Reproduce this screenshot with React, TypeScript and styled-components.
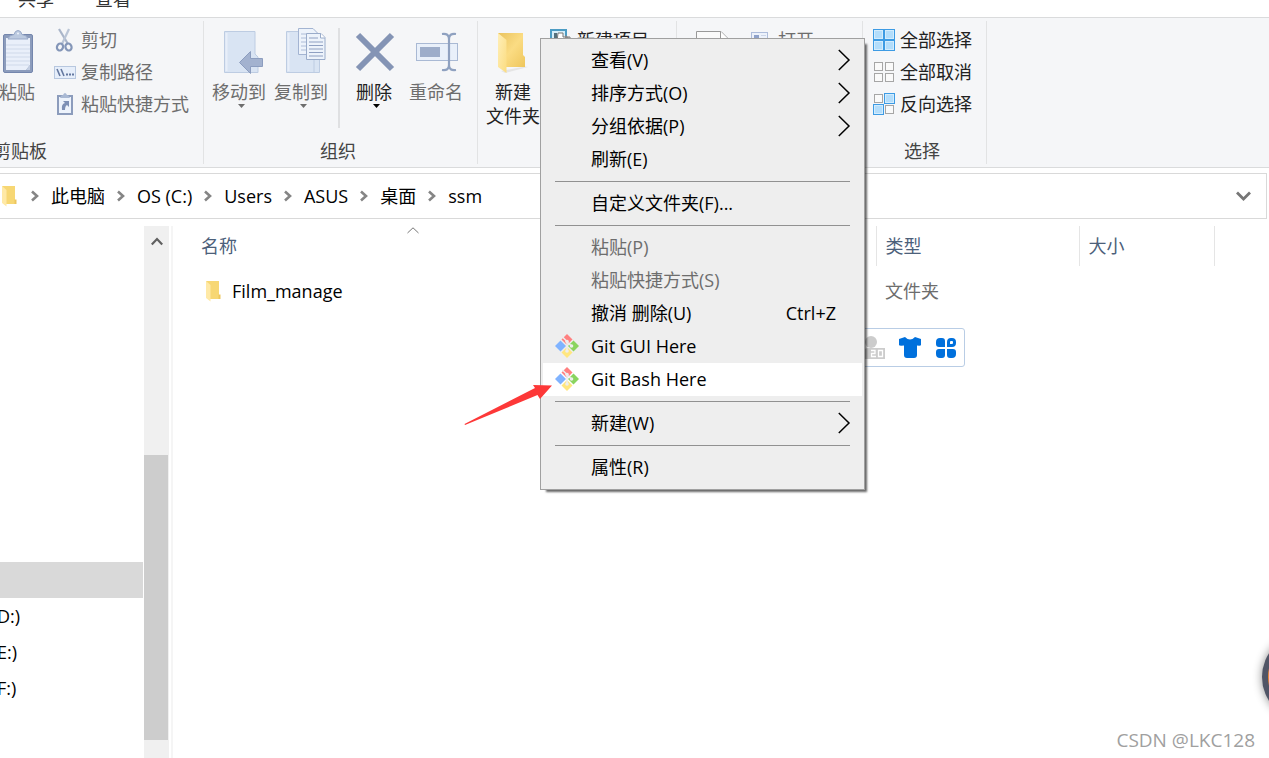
import React from "react";
import styled, { createGlobalStyle } from "styled-components";

const Global = createGlobalStyle`
  *, *::before, *::after { box-sizing: border-box; }
  body { margin: 0; background: #fff; overflow: hidden; }
  body, button, input {
    font-family: "Open Sans", "Noto Sans CJK SC", sans-serif;
    font-size: 18px;
    line-height: 24px;
    color: #000;
  }
  button { border: 0; padding: 0; margin: 0; background: none; text-align: inherit; }
  svg { display: block; flex: none; overflow: visible; }
`;

const Window = styled.div`
  position: relative;
  display: flex;
  flex-direction: column;
  min-height: 100vh;
  overflow: hidden;
`;

/* ---------- ribbon ---------- */

const Tabs = styled.nav`
  display: flex;
  align-items: flex-end;
  gap: 41px;
  height: 17px;
  padding: 0 18px 6px;
  overflow: hidden;
`;

const Tab = styled.button`
  flex: none;
  color: #333;
`;

const Ribbon = styled.div`
  display: flex;
  height: 151px;
  padding: 3px 0;
  background: #f5f6f8;
  border-top: 1px solid #dadbdc;
  border-bottom: 1px solid #dadbdc;
`;

const Group = styled.section<{ $width: number }>`
  display: flex;
  flex-direction: column;
  justify-content: space-between;
  flex: none;
  width: ${(p) => p.$width}px;
  padding: 3px 0 1px;
  border-right: 1px solid #e2e3e4;
`;

const GroupBody = styled.div<{ $indent?: number }>`
  display: flex;
  padding-left: ${(p) => p.$indent ?? 0}px;
`;

const GroupLabel = styled.div<{ $width?: number }>`
  display: flex;
  justify-content: center;
  width: ${(p) => (p.$width ? `${p.$width}px` : "auto")};
  padding-right: 5px;
  white-space: nowrap;
  color: #444;
`;

const BigButton = styled.button<{ $width?: number; $muted?: boolean }>`
  display: flex;
  flex-direction: column;
  align-items: center;
  flex: none;
  width: ${(p) => p.$width ?? 62}px;
  padding-top: 4px;
  white-space: nowrap;
  text-align: center;
  color: ${(p) => (p.$muted ? "#6d6d6d" : "#222")};
  > svg:first-child { margin-bottom: 4px; }
  > svg:last-child:not(:first-child) { margin-left: 4px; }
`;

const Divider = styled.div`
  width: 2px;
  height: 100px;
  margin: 4px 3px 0 6px;
  background: #dfe0e2;
`;

const Stack = styled.div<{ $left?: number }>`
  display: flex;
  flex-direction: column;
  margin-left: ${(p) => p.$left ?? 0}px;
`;

const SmallButton = styled.button<{ $muted?: boolean }>`
  display: flex;
  align-items: center;
  gap: 3px;
  height: 32px;
  white-space: nowrap;
  color: ${(p) => (p.$muted ? "#6d6d6d" : "#222")};
`;

/* ---------- address bar ---------- */

const AddressBar = styled.div`
  display: flex;
  align-items: center;
  height: 46px;
  margin: 5px 2px 0 0;
  padding: 0 15px 0 1px;
  border: 1px solid #d9d9d9;
  border-left: 0;
`;

const Crumbs = styled.ol`
  display: flex;
  align-items: center;
  flex: 1;
  margin: 0;
  padding: 0;
  list-style: none;
`;

const Crumb = styled.li`
  display: flex;
  align-items: center;
  gap: 12px;
  margin-right: 12px;
  &:first-child { margin-right: 14px; }
`;

const CrumbLink = styled.a`
  color: #000;
  text-decoration: none;
`;

/* ---------- body ---------- */

const Body = styled.div`
  display: flex;
  flex: 1;
  padding-top: 7px;
`;

const Side = styled.nav`
  display: flex;
  flex-direction: column;
  width: 144px;
  padding: 336px 1px 0 0;
  overflow: hidden;
`;

const SideItem = styled.a<{ $selected?: boolean }>`
  height: 36px;
  line-height: 36px;
  text-indent: -3px;
  color: #000;
  text-decoration: none;
  background: ${(p) => (p.$selected ? "#d9d9d9" : "transparent")};
`;

const Scrollbar = styled.div`
  display: flex;
  flex-direction: column;
  align-items: center;
  width: 25px;
  background: #f0f0f0;
`;

const ScrollUp = styled.button`
  display: grid;
  place-items: center;
  width: 100%;
  height: 30px;
`;

const Thumb = styled.div`
  flex: 1;
  align-self: flex-start;
  width: 24px;
  margin: 199px 0 18px;
  background: #cdcdcd;
`;

const Main = styled.main`
  flex: 1;
  margin-left: 2px;
  border-left: 2px solid #f5f5f5;
`;

const Files = styled.table`
  table-layout: fixed;
  width: 1041px;
  border-collapse: collapse;
`;

const Head = styled.th<{ $width: number; $line?: boolean }>`
  width: ${(p) => p.$width}px;
  height: 40px;
  padding: 0 0 0 9px;
  text-align: left;
  font-weight: 400;
  color: #4c607a;
  border-right: ${(p) => (p.$line ? "1px solid #e5e5e5" : "0")};
  &:first-child { padding-left: 28px; }
`;

const HeadInner = styled.span`
  position: relative;
  display: block;
  line-height: 40px;
`;

const SortMark = styled.svg`
  position: absolute;
  top: 1px;
  left: 206px;
`;

const Cell = styled.td`
  height: 50px;
  padding: 0 0 0 9px;
  color: #6d6d6d;
  &:first-child { padding-left: 32px; }
`;

const FileName = styled.span`
  display: flex;
  align-items: center;
  gap: 11px;
  color: #000;
`;

/* ---------- things lying over the window ---------- */

const ImeBar = styled.div`
  position: absolute;
  top: 328px;
  left: 800px;
  display: flex;
  align-items: center;
  gap: 12px;
  width: 165px;
  height: 39px;
  padding: 0 6px 0 0;
  justify-content: flex-end;
  background: #fff;
  border: 1px solid #b9cde5;
  border-radius: 3px;
`;

const Menu = styled.div`
  position: absolute;
  top: 38px;
  left: 540px;
  width: 325px;
  padding: 5px 2px;
  background: #eee;
  border: 1px solid #a0a0a0;
  box-shadow: 4px 4px 2px -2px rgba(0, 0, 0, 0.6);
`;

const MenuItem = styled.button<{ $active?: boolean }>`
  display: grid;
  grid-template-columns: 24px 1fr auto 12px;
  align-items: center;
  column-gap: 12px;
  width: 100%;
  height: 33px;
  padding: 0 12px 2px;
  color: #000;
  background: ${(p) => (p.$active ? "#fff" : "transparent")};
  &:disabled { color: #6d6d6d; }
`;

const MenuLabel = styled.span`
  white-space: nowrap;
`;

const Shortcut = styled.span`
  margin-right: -10px;
`;

const MenuLine = styled.hr`
  height: 1px;
  margin: 5px 12px;
  border: 0;
  background: #919191;
`;

const Pointer = styled.svg`
  position: absolute;
  top: 380px;
  left: 460px;
`;

const Bubble = styled.div`
  position: absolute;
  right: -81px;
  bottom: 37px;
  display: grid;
  place-items: center;
  width: 88px;
  height: 88px;
  border-radius: 50%;
  background: #505566;
  box-shadow: 0 0 10px rgba(0, 0, 0, 0.45);
`;

const BubbleCore = styled.div`
  width: 76px;
  height: 76px;
  border-radius: 50%;
  background: #f08a3c;
`;

const Watermark = styled.div`
  position: absolute;
  right: 14px;
  bottom: 6px;
  font-size: 19px;
  color: #a0a0a0;
`;

/* ---------- drawings ---------- */

const Caret = ({ color = "#000" }: { color?: string }) => (
  <svg width="7" height="4" viewBox="0 0 7 4"><path d="M0 0H7L3.5 4Z" fill={color} /></svg>
);

const Chevron = () => (
  <svg width="8" height="12" viewBox="0 0 8 12"><path d="M1 1.5 6 6 1 10.5" fill="none" stroke="#858585" strokeWidth="2.6" /></svg>
);

const MenuArrow = () => (
  <svg width="12" height="22" viewBox="0 0 12 22"><path d="M.8 1 11 11 .8 21" fill="none" stroke="#000" strokeWidth="1.5" /></svg>
);

const Folder = () => (
  <svg width="16" height="22" viewBox="0 0 16 22">
    <path d="M1 1H14V15H15V19H5Z" fill="#f7d774" />
    <path d="M13.5 14.5H15.5V19H13.5Z" fill="#ecc65f" />
    <path d="M1 1 5.5 5V21.5L1 18Z" fill="#ffe9a6" />
  </svg>
);

const BigFolder = () => (
  <svg width="34" height="48" viewBox="1 0 34 48">
    <defs>
      <linearGradient id="bf" x1="0" y1="0" x2="1" y2="1"><stop offset="0" stopColor="#e9c35e" /><stop offset=".5" stopColor="#fbdc83" /><stop offset="1" stopColor="#eec65c" /></linearGradient>
      <linearGradient id="ff" x1="0" y1="0" x2="1" y2="1"><stop offset="0" stopColor="#ffefb8" /><stop offset="1" stopColor="#fbdc80" /></linearGradient>
    </defs>
    <path d="M6 43 30 38.500 33 39 10 45Z" fill="#e5e5e5" />
    <path d="M3 5H28V27L30 29V39H10Z" fill="url(#bf)" />
    <path d="M3 5 11.500 12V45L3 39Z" fill="url(#ff)" />
  </svg>
);

const Clipboard = () => (
  <svg width="32" height="48" viewBox="-1 0 32 48">
    <rect x="1.500" y="6.500" width="29" height="38" rx="1.500" fill="#8c9cbc" stroke="#7486ad" />
    <path d="M4 10H28V37L24 42H4Z" fill="#e9effa" />
    <path d="M4 17H28M4 21H28M4 25H28M4 29H28M4 33H28M4 37H27" stroke="#cfd9ea" />
    <path d="M28 37V42H24Z" fill="#c3cee2" />
    <path d="M6 11Q7 7 12 6.500Q13 2.500 16 2.500T20 6.500Q25 7 26 11Z" fill="#bccae0" stroke="#98a9c8" />
    <circle cx="16" cy="5.500" r="1" fill="#eef3fa" />
  </svg>
);

const MoveTo = () => (
  <svg width="46" height="48" viewBox="-1 0 46 48">
    <path d="M7.500 3.500H38V26L41 29V44.500H7.500Z" fill="#d9e4f3" stroke="#bdcce2" />
    <path d="M9.500 5V43" stroke="#e8eff9" strokeWidth="2" />
    <path d="M22.500 34.500 33.500 23.500V30.500H45.500V38.500H33.500V45.500Z" fill="#a3b2cf" stroke="#8c9dbf" />
  </svg>
);

const CopyTo = () => (
  <svg width="46" height="48" viewBox="-1 0 46 48">
    <path d="M7.500 3.500H35V26L40.500 29V44.500H7.500Z" fill="#d9e4f3" stroke="#bdcce2" />
    <path d="M9.500 5V43" stroke="#e8eff9" strokeWidth="2" />
    <path d="M35 31V44" stroke="#bdcce2" />
    <path d="M19.500.500H34L38.500 5V26.500H19.500Z" fill="#edf3fb" stroke="#a3b4d2" />
    <path d="M22 6H31M22 10H29M22 14H29M22 18H29M22 22H29" stroke="#aebdd8" />
    <path d="M27.500 5.500H42L46 9.500V31.500H27.500Z" fill="#edf3fb" stroke="#9aacca" />
    <path d="M41.500 5.500V10H46" fill="#fff" stroke="#9aacca" />
    <path d="M30 10H39M30 14H44M30 17.500H44M30 21H44M30 24.500H44M30 28H44" stroke="#8fa0c2" />
  </svg>
);

const DeleteX = () => (
  <svg width="42" height="48" viewBox="-1 0 42 48"><path d="M4 7 38 41M38 7 4 41" stroke="#8494b5" strokeWidth="6" /></svg>
);

const Rename = () => (
  <svg width="44" height="48" viewBox="0 0 44 48">
    <rect x="2.500" y="15.500" width="41" height="17" fill="#e9f0fa" stroke="#a9b9d4" />
    <rect x="6" y="19" width="20" height="10" fill="#9dadca" />
    <path d="M28 6Q35 5 35 11Q35 5 42 6M35 10V38M28 42Q35 43 35 37Q35 43 42 42" fill="none" stroke="#8fa1c0" strokeWidth="2.200" />
  </svg>
);

const Scissors = () => (
  <svg width="24" height="24" viewBox="1 0 24 24" fill="none">
    <path d="M6 1 15 16" stroke="#a9b5c9" strokeWidth="2.200" />
    <path d="M16 1 9 16" stroke="#bac5d6" strokeWidth="2.200" />
    <ellipse cx="7" cy="19" rx="3" ry="3.500" stroke="#8496b8" strokeWidth="2.200" transform="rotate(25 7 19)" />
    <ellipse cx="15.500" cy="19" rx="3" ry="3.500" stroke="#8496b8" strokeWidth="2.200" transform="rotate(-25 15.500 19)" />
  </svg>
);

const PathIcon = () => (
  <svg width="24" height="24" viewBox="0 0 24 24">
    <rect x=".5" y="6.500" width="21" height="12" fill="#e6eefa" stroke="#b7c7df" />
    <path d="M3 9 6 16M7 9 10 16" stroke="#6478a0" strokeWidth="1.600" />
    <path d="M12 14.500H14M15 14.500H17M18 14.500H20" stroke="#6478a0" strokeWidth="2" />
  </svg>
);

const PasteLink = () => (
  <svg width="24" height="24" viewBox="0 0 24 24">
    <rect x="4" y="4" width="14" height="18" fill="#edf3fc" stroke="#8c9cbc" strokeWidth="2" />
    <path d="M6 6Q7 3 9 3Q11-1 13 3Q15 3 16 6Z" fill="#a9b9d4" />
    <path d="M8 18Q7 12 11 11L9 9H15V15L13 13Q11 14 11 18Z" fill="#7d90b6" />
  </svg>
);

const NewItem = () => (
  <svg width="24" height="24" viewBox="0 0 24 24">
    <rect x="1" y="2" width="15" height="19" fill="#d7effa" stroke="#4c9cc4" strokeWidth="2" />
    <path d="M4 5H7V12H4Z" fill="#55707c" />
    <path d="M8 5H13V9H20V14H7Z" fill="#fff" stroke="#777" />
    <path d="M15 7 21 11H15Z" fill="#888" />
  </svg>
);

const PageIcon = () => (
  <svg width="36" height="48" viewBox="0 0 36 48">
    <path d="M1.500 3.500H26L35 12.500V46.500H1.500Z" fill="#fafafa" stroke="#999" />
    <path d="M25.500 3.500V13H35" fill="#fff" stroke="#999" />
  </svg>
);

const OpenIcon = () => (
  <svg width="24" height="24" viewBox="0 0 24 24">
    <rect x=".5" y="4.500" width="16" height="16" fill="#edf2fb" stroke="#aebddb" />
    <rect x="3" y="7" width="5" height="5" fill="#8fa2ca" />
    <path d="M10 7.500H15M10 11.500H15" stroke="#ccd6e8" />
  </svg>
);

const Tiles = ({ on }: { on: boolean[] }) => (
  <svg width="24" height="24" viewBox="0 0 24 24">
    {[[1, 2], [12, 2], [1, 13], [12, 13]].map(([x, y], i) =>
      on[i] ? (
        <g key={i}>
          <rect x={x - 0.5} y={y - 0.5} width="10" height="10" fill="#b3ddfb" stroke="#3d9be4" />
          <rect x={x + 0.5} y={y + 0.5} width="8" height="8" fill="none" stroke="#d3ecfd" />
        </g>
      ) : (
        <rect key={i} x={x + 0.5} y={y + 0.5} width="8" height="8" fill="#fafafa" stroke="#a6a6a6" />
      )
    )}
  </svg>
);

const GitIcon = () => (
  <svg width="24" height="24" viewBox="0 0 24 24">
    <path d="M12 0 17.500 5.500 12 11 6.500 5.500Z" fill="#ff8080" />
    <path d="M5.500 6.500 11 12 5.500 17.500 0 12Z" fill="#80b3ff" />
    <path d="M18.500 6.500 24 12 18.500 17.500 13 12Z" fill="#8ad45f" />
    <path d="M12 13 17.500 18.500 12 24 6.500 18.500Z" fill="#ffe680" />
    <path d="M7.500 3 12 7.500V17M12 8 16.500 12" fill="none" stroke="#eee" strokeWidth="1.500" />
    <circle cx="12" cy="7.500" r="1.800" fill="#eee" /><circle cx="12" cy="17" r="1.800" fill="#eee" /><circle cx="16.500" cy="12" r="1.800" fill="#eee" />
  </svg>
);

const Person = () => (
  <svg width="24" height="24" viewBox="0 0 24 24">
    <circle cx="9" cy="6" r="6" fill="#ccc" />
    <path d="M0 23V17Q1 12 7 12H12V23Z" fill="#ccc" />
    <rect x="7" y="12" width="16" height="11" fill="#ccc" />
    <path d="M9 14.500H13V17.500H9.500V20.500H14M16.500 14.500H20.500V20.500H16.500Z" fill="none" stroke="#fff" strokeWidth="1.300" />
  </svg>
);

const Shirt = () => (
  <svg width="24" height="24" viewBox="0 0 24 24">
    <path d="M1 3 7 1Q12 6 17 1L23 3V9Q23 10 19 9.500V19Q19 22 16 22H9Q6 22 6 19V9.500Q1 10 1 9Z" fill="#0070dc" />
  </svg>
);

const Apps = () => (
  <svg width="24" height="24" viewBox="0 0 24 24" fill="#0070dc">
    <path d="M6 2H8Q11 2 11 5V11H5Q2 11 2 8V6Q2 2 6 2ZM5 13H11V19Q11 22 8 22H6Q2 22 2 18V16Q2 13 5 13ZM13 13H19Q22 13 22 16V18Q22 22 18 22H16Q13 22 13 19Z" />
    <path d="M14.500 9.500V6Q14.500 3.500 17 3.500H18Q20.500 3.500 20.500 6V7Q20.500 9.500 18 9.500Z" fill="#fff" stroke="#0070dc" strokeWidth="3" />
  </svg>
);

const crumbs = ["此电脑", "OS (C:)", "Users", "ASUS", "桌面", "ssm"];

type Entry = { label: string; sub?: boolean; keys?: string; git?: boolean; active?: boolean; off?: boolean };

const menu: Entry[][] = [
  [{ label: "查看(V)", sub: true }, { label: "排序方式(O)", sub: true }, { label: "分组依据(P)", sub: true }, { label: "刷新(E)" }],
  [{ label: "自定义文件夹(F)..." }],
  [
    { label: "粘贴(P)", off: true },
    { label: "粘贴快捷方式(S)", off: true },
    { label: "撤消 删除(U)", keys: "Ctrl+Z" },
    { label: "Git GUI Here", git: true },
    { label: "Git Bash Here", git: true, active: true },
  ],
  [{ label: "新建(W)", sub: true }],
  [{ label: "属性(R)" }],
];

export default function App() {
  return (
    <Window>
      <Global />
      <Tabs>
        <Tab>共享</Tab>
        <Tab>查看</Tab>
      </Tabs>
      <Ribbon>
        <Group $width={204}>
          <GroupBody>
            <BigButton $width={34} $muted><Clipboard />粘贴</BigButton>
            <Stack $left={20}>
              <SmallButton $muted><Scissors />剪切</SmallButton>
              <SmallButton $muted><PathIcon />复制路径</SmallButton>
              <SmallButton $muted><PasteLink />粘贴快捷方式</SmallButton>
            </Stack>
          </GroupBody>
          <GroupLabel $width={45}>剪贴板</GroupLabel>
        </Group>
        <Group $width={274}>
          <GroupBody $indent={4}>
            <BigButton $muted><MoveTo />移动到<Caret color="#6d6d6d" /></BigButton>
            <BigButton $muted><CopyTo />复制到<Caret color="#6d6d6d" /></BigButton>
            <Divider />
            <BigButton><DeleteX />删除<Caret /></BigButton>
            <BigButton $muted><Rename />重命名</BigButton>
          </GroupBody>
          <GroupLabel>组织</GroupLabel>
        </Group>
        <Group $width={199}>
          <GroupBody $indent={4}>
            <BigButton><BigFolder />新建<br />文件夹</BigButton>
            <Stack $left={6}>
              <SmallButton><NewItem />新建项目<Caret /></SmallButton>
            </Stack>
          </GroupBody>
        </Group>
        <Group $width={186}>
          <GroupBody $indent={5}>
            <BigButton aria-label="属性"><PageIcon /></BigButton>
            <Stack $left={7}>
              <SmallButton $muted><OpenIcon />打开</SmallButton>
            </Stack>
          </GroupBody>
        </Group>
        <Group $width={124}>
          <GroupBody $indent={10}>
            <Stack>
              <SmallButton><Tiles on={[true, true, true, true]} />全部选择</SmallButton>
              <SmallButton><Tiles on={[false, false, false, false]} />全部取消</SmallButton>
              <SmallButton><Tiles on={[false, true, true, false]} />反向选择</SmallButton>
            </Stack>
          </GroupBody>
          <GroupLabel>选择</GroupLabel>
        </Group>
      </Ribbon>

      <AddressBar>
        <Crumbs>
          <Crumb><Folder /></Crumb>
          {crumbs.map((c) => (
            <Crumb key={c}><Chevron /><CrumbLink href="#">{c}</CrumbLink></Crumb>
          ))}
        </Crumbs>
        <button aria-label="展开">
          <svg width="15" height="10" viewBox="0 0 15 10"><path d="M1 1.500 7.500 8 14 1.500" fill="none" stroke="#767676" strokeWidth="2.800" /></svg>
        </button>
      </AddressBar>

      <Body>
        <Side>
          <SideItem href="#" $selected aria-label="OS (C:)" />
          <SideItem href="#">D:)</SideItem>
          <SideItem href="#">E:)</SideItem>
          <SideItem href="#">F:)</SideItem>
        </Side>
        <Scrollbar>
          <ScrollUp aria-label="向上">
            <svg width="12" height="9" viewBox="0 0 12 9"><path d="M.8 7.500 6 2 11.200 7.500" fill="none" stroke="#606060" strokeWidth="2.200" /></svg>
          </ScrollUp>
          <Thumb />
        </Scrollbar>
        <Main>
          <Files>
            <thead>
              <tr>
                <Head $width={454}>
                  <HeadInner>
                    名称
                    <SortMark width="12" height="7" viewBox="0 0 12 7"><path d="M.5 6 6 .8 11.500 6" fill="none" stroke="#777" /></SortMark>
                  </HeadInner>
                </Head>
                <Head $width={249} $line />
                <Head $width={203} $line>类型</Head>
                <Head $width={135} $line>大小</Head>
              </tr>
            </thead>
            <tbody>
              <tr>
                <Cell><FileName><Folder />Film_manage</FileName></Cell>
                <Cell />
                <Cell>文件夹</Cell>
                <Cell />
              </tr>
            </tbody>
          </Files>
        </Main>
      </Body>

      <ImeBar><Person /><Shirt /><Apps /></ImeBar>

      <Menu role="menu">
        {menu.map((section, i) => (
          <React.Fragment key={i}>
            {i > 0 && <MenuLine />}
            {section.map((m) => (
              <MenuItem key={m.label} role="menuitem" $active={m.active} disabled={m.off}>
                {m.git ? <GitIcon /> : <span />}
                <MenuLabel>{m.label}</MenuLabel>
                {m.keys ? <Shortcut>{m.keys}</Shortcut> : <span />}
                {m.sub && <MenuArrow />}
              </MenuItem>
            ))}
          </React.Fragment>
        ))}
      </Menu>

      <Pointer width="96" height="48" viewBox="0 0 96 48">
        <path d="M4.500 44 75 8 73 5 92 5.500 80 19 77.500 15 5 45Z" fill="#fd3838" />
      </Pointer>
      <Bubble><BubbleCore /></Bubble>
      <Watermark>CSDN @LKC128</Watermark>
    </Window>
  );
}
